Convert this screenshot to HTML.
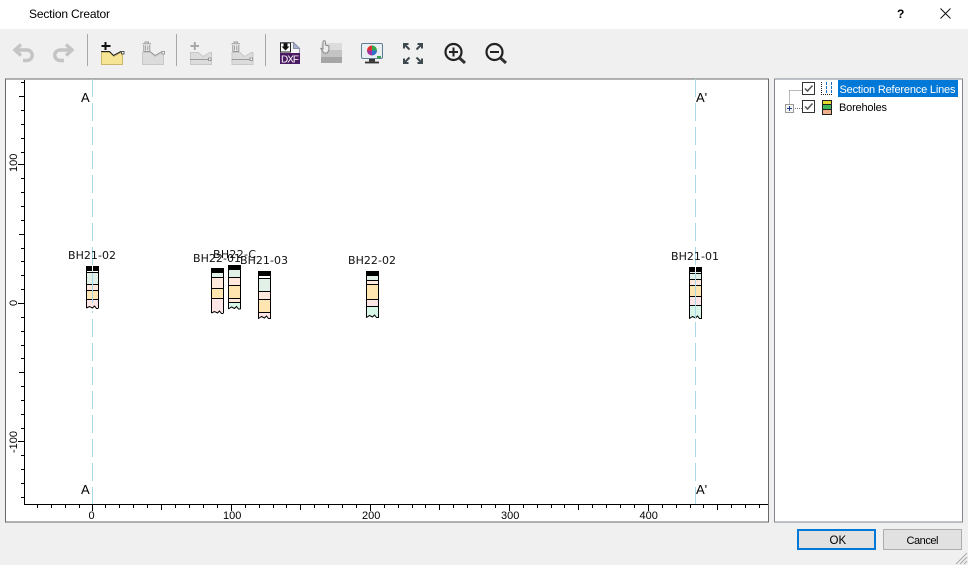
<!DOCTYPE html>
<html><head><meta charset="utf-8"><style>
html,body{margin:0;padding:0;width:968px;height:565px;overflow:hidden;background:#f0f0f0}
svg{display:block}
text{font-family:"Liberation Sans",sans-serif;fill:#000}
.l{font-family:"DejaVu Sans",sans-serif;font-size:11px;fill:#111}
.a{font-size:13px}
.t{font-size:11px}
.u{font-size:12px}
.c rect,.cr{shape-rendering:crispEdges}
</style></head><body>
<svg width="968" height="565" viewBox="0 0 968 565" xmlns="http://www.w3.org/2000/svg">
<rect width="968" height="565" fill="#f0f0f0"/>
<rect width="968" height="29" fill="#fff"/>
<text x="29" y="18" class="u" textLength="81">Section Creator</text>
<text x="897" y="18" style="font-size:12px;font-weight:bold" fill="#222">?</text>
<path d="M940.500 8.500l10 10M950.500 8.500l-10 10" stroke="#111" stroke-width="1" fill="none"/>

<!-- toolbar -->
<g fill="none" stroke="#c4c4c4" stroke-width="3.400">
<path d="M17 50h10a5 5 0 0 1 0 10.500h-4"/>
<path d="M21 44.500l-6 5.500 6 5.500"/>
<path d="M70 50h-10a5 5 0 0 0 0 10.500h4"/>
<path d="M66 44.500l6 5.500-6 5.500"/>
</g>
<g class="cr" stroke="#a8a8a8" fill="none"><path d="M87.500 34v32M176.500 34v32M265.500 34v32"/></g>

<!-- add section -->
<path d="M101.500 52.500h8l4.500 4 7-4h1.500v12h-21z" fill="#f6e594" stroke="#c9b86a"/>
<path d="M101 51.500h8.500l4 4 7.500-4" fill="none" stroke="#222" stroke-width="1"/>
<rect x="121.500" y="51.500" width="2.500" height="2.500" fill="#fff" stroke="#333" stroke-width=".8"/>
<path d="M101.500 46h9M105.500 42v8" stroke="#111" stroke-width="2" fill="none"/>
<!-- delete section -->
<path d="M142.500 52.500h8l4.500 4 7-4h1.500v12h-21z" fill="#dcdcdc" stroke="#c8c8c8"/>
<path d="M150 51.500l5 4 7-4" fill="none" stroke="#999"/>
<rect x="162" y="51.500" width="2.500" height="2.500" fill="#fff" stroke="#888" stroke-width=".8"/>
<path d="M142.500 43.800h8.500M145 43v-1h3.500v1M143.800 45v6.500h6v-6.500M145.600 45.500v5M147.800 45.500v5" fill="none" stroke="#999"/>
<!-- add line -->
<path d="M190.500 52.500h8l4.500 4 7-4h1.500v12h-21z" fill="#dcdcdc" stroke="#c8c8c8"/>
<path d="M190 59.500h19" stroke="#9a9a9a" fill="none"/>
<rect x="208.500" y="58" width="2.500" height="2.500" fill="#fff" stroke="#888" stroke-width=".8"/>
<path d="M190.500 46h8.500M194.800 42v8" stroke="#a8a8a8" stroke-width="2" fill="none"/>
<!-- delete line -->
<path d="M232 52.500h8l4.500 4 7-4h1.500v12h-21z" fill="#dcdcdc" stroke="#c8c8c8"/>
<path d="M231.500 59.500h19" stroke="#9a9a9a" fill="none"/>
<rect x="250" y="58" width="2.500" height="2.500" fill="#fff" stroke="#888" stroke-width=".8"/>
<path d="M231.500 43.800h8.500M234 43v-1h3.500v1M232.800 45v6.500h6v-6.500M234.600 45.500v5M236.800 45.500v5" fill="none" stroke="#999"/>

<!-- DXF -->
<path d="M280.500 42.500h13l6 6v6h-19z" fill="#f4f4f6" stroke="#8b8fa8"/>
<path d="M293.500 42.500v6h6z" fill="#a9b3cf" stroke="#8b8fa8"/>
<rect x="280.500" y="43" width="10" height="9" fill="#fff" stroke="#222"/>
<path d="M283.500 43.500h4v3h2l-4 4-4-4h2z" fill="#111"/>
<rect x="280" y="53" width="20" height="11" fill="#4a1a63"/>
<text x="281" y="62.300" style="font-size:10px;fill:#fff" textLength="18">DXF</text>
<!-- hand layers -->
<g class="c"><rect x="321" y="43" width="21" height="7" fill="#dcdcdc"/><rect x="321" y="50" width="21" height="7" fill="#c4c4c4"/><rect x="321" y="57" width="21" height="6" fill="#a6a6a6"/></g>
<path d="M323 49v-7a1.200 1.200 0 0 1 2.400 0v3l3.500 1v4l-1.500 3h-3.500l-3-4.500z" fill="#ececec" stroke="#888"/>
<!-- monitor -->
<rect x="361.500" y="43.500" width="21" height="15" rx="1.500" fill="#e8eef2" stroke="#5b7e94"/>
<path d="M369 59h6v2.500h-6z" fill="#333"/><path d="M365 62.500h14" stroke="#333" stroke-width="1.800" fill="none"/>
<circle cx="372" cy="50.500" r="5" fill="#f4b020"/>
<path d="M372 50.500V45.500A5 5 0 0 1 377 50.500z" fill="#2fa84f"/>
<path d="M372 50.500H377A5 5 0 0 1 372 55.500z" fill="#2f6fd0"/>
<path d="M372 50.500V55.500A5 5 0 0 1 367 50.500z" fill="#a030a8"/>
<path d="M372 50.500H367A5 5 0 0 1 372 45.500z" fill="#e03030"/>
<path d="M377 57h4" stroke="#2fa84f" stroke-width="2" fill="none"/>
<!-- expand -->
<g fill="none" stroke="#3f4a50" stroke-width="2">
<path d="M404 48.500V44h4.500M404.500 44.500l5 5"/>
<path d="M422 48.500V44h-4.500M421.500 44.500l-5 5"/>
<path d="M404 58.500V63h4.500M404.500 62.500l5-5"/>
<path d="M422 58.500V63h-4.500M421.500 62.500l-5-5"/>
</g>
<!-- zoom -->
<g fill="none" stroke="#222">
<circle cx="453.500" cy="52" r="8" stroke-width="2.200"/>
<path d="M449 52h9M453.500 47.500v9" stroke-width="2"/>
<path d="M459.500 58l5.500 5" stroke-width="3" stroke="#333"/>
<circle cx="494.500" cy="52" r="8" stroke-width="2.200"/>
<path d="M490 52h9" stroke-width="2"/>
<path d="M500.500 58l5.500 5" stroke-width="3" stroke="#333"/>
</g>

<!-- plot frame -->
<rect x="5.500" y="79" width="763" height="443" fill="#fff" stroke="#696969" class="cr"/>
<rect x="774.500" y="79" width="188" height="443" fill="#fff" stroke="#828790" class="cr"/>

<!-- reference lines -->
<g stroke="#a9d8e6" stroke-dasharray="18 6" class="cr" fill="none"><path d="M92.500 79V504M695.500 79V504"/></g>

<!-- axes -->
<g class="cr" stroke="#000" fill="none">
<path d="M24.500 80V504.500H768"/>
<path d="M37.500 505v3M51.500 505v3M65.500 505v3M79.500 505v3M92.500 505v6M105.500 505v3M119.500 505v3M133.500 505v3M147.500 505v3M161.500 505v5M175.500 505v3M189.500 505v3M203.500 505v3M217.500 505v3M231.500 505v6M245.500 505v3M259.500 505v3M273.500 505v3M286.500 505v3M300.500 505v5M314.500 505v3M328.500 505v3M342.500 505v3M356.500 505v3M370.500 505v6M384.500 505v3M398.500 505v3M412.500 505v3M425.500 505v3M439.500 505v5M453.500 505v3M467.500 505v3M481.500 505v3M495.500 505v3M509.500 505v6M523.500 505v3M537.500 505v3M551.500 505v3M564.500 505v3M578.500 505v5M592.500 505v3M606.500 505v3M620.500 505v3M634.500 505v3M648.500 505v6M662.500 505v3M676.500 505v3M690.500 505v3M703.500 505v3M717.500 505v5M731.500 505v3M745.500 505v3M759.500 505v3"/>
<path d="M21 82.500h3M19 96.500h5M21 110.500h3M21 124.500h3M21 138.500h3M21 152.500h3M18 164.500h6M21 178.500h3M21 192.500h3M21 206.500h3M21 220.500h3M19 234.500h5M21 248.500h3M21 261.500h3M21 275.500h3M21 289.500h3M18 303.500h6M21 317.500h3M21 331.500h3M21 345.500h3M21 358.500h3M19 372.500h5M21 386.500h3M21 400.500h3M21 414.500h3M21 428.500h3M18 441.500h6M21 455.500h3M21 469.500h3M21 483.500h3M21 497.500h3"/>
</g>
<g class="t">
<text x="88.500" y="519">0</text>
<text x="223" y="519">100</text>
<text x="362" y="519">200</text>
<text x="501" y="519">300</text>
<text x="639.500" y="519">400</text>
<text transform="translate(17,172) rotate(-90)">100</text>
<text transform="translate(17,306) rotate(-90)">0</text>
<text transform="translate(17,453) rotate(-90)">-100</text>
</g>
<g class="a">
<text x="81" y="102">A</text><text x="81" y="494">A</text>
<text x="696" y="102">A'</text><text x="696" y="494">A'</text>
</g>

<!-- boreholes -->
<g class="c">
<rect x="86" y="272" width="13" height="12" fill="#e2f1e8"/><rect x="86" y="284" width="13" height="6" fill="#ffe8dc"/><rect x="86" y="290" width="13" height="9" fill="#ffe6b0"/><rect x="86" y="299" width="13" height="9" fill="#ffe6e6"/>
<rect x="211" y="273" width="13" height="4" fill="#e2f1e8"/><rect x="211" y="277" width="13" height="11" fill="#ffe8dc"/><rect x="211" y="288" width="13" height="10" fill="#ffe6b0"/><rect x="211" y="298" width="13" height="15" fill="#ffe6e6"/>
<rect x="228" y="270" width="13" height="7" fill="#e2f1e8"/><rect x="228" y="277" width="13" height="8" fill="#ffe8dc"/><rect x="228" y="285" width="13" height="13" fill="#ffe6b0"/><rect x="228" y="298" width="13" height="4" fill="#ffe8dc"/><rect x="228" y="302" width="13" height="8" fill="#d8f7e8"/>
<rect x="258" y="278" width="13" height="13" fill="#e2f1e8"/><rect x="258" y="291" width="13" height="8" fill="#ffe8dc"/><rect x="258" y="299" width="13" height="13" fill="#ffe6b0"/><rect x="258" y="312" width="13" height="7" fill="#ffe6e6"/>
<rect x="366" y="276" width="13" height="4" fill="#e2f1e8"/><rect x="366" y="280" width="13" height="4" fill="#ffe8dc"/><rect x="366" y="284" width="13" height="15" fill="#ffe6b0"/><rect x="366" y="299" width="13" height="7" fill="#ffe6e6"/><rect x="366" y="306" width="13" height="12" fill="#d8f7e8"/>
<rect x="689" y="272" width="13" height="7" fill="#e2f1e8"/><rect x="689" y="279" width="13" height="6" fill="#ffe8dc"/><rect x="689" y="285" width="13" height="11" fill="#ffe6b0"/><rect x="689" y="296" width="13" height="9" fill="#ffe6e6"/><rect x="689" y="305" width="13" height="14" fill="#d8f7e8"/>
<!-- caps -->
<rect x="86" y="266" width="13" height="5" fill="#000"/><rect x="211" y="268" width="13" height="5" fill="#000"/><rect x="228" y="265" width="13" height="5" fill="#000"/><rect x="258" y="271" width="13" height="5" fill="#000"/><rect x="366" y="271" width="13" height="5" fill="#000"/><rect x="689" y="267" width="13" height="5" fill="#000"/>
</g>
<g class="cr" stroke="#000" fill="none">
<path d="M86.500 266V308M98.500 266V308M86 272.500h13M86 284.500h13M86 290.500h13M86 299.500h13"/>
<path d="M211.500 268V313M223.500 268V313M211 277.500h13M211 288.500h13M211 298.500h13"/>
<path d="M228.500 265V309M240.500 265V309M228 277.500h13M228 285.500h13M228 298.500h13M228 302.500h13"/>
<path d="M258.500 271V319M270.500 271V319M258 278.500h13M258 291.500h13M258 299.500h13M258 312.500h13"/>
<path d="M366.500 271V318M378.500 271V318M366 280.500h13M366 284.500h13M366 299.500h13M366 306.500h13"/>
<path d="M689.500 267V319M701.500 267V319M689 273.500h13M689 279.500h13M689 285.500h13M689 296.500h13M689 305.500h13"/>
</g>
<g stroke="#000" stroke-width="1">
<path d="M86 308.500l3-1.500 3 1 2-2 2 2 3 .5V311H86z" fill="#fff" stroke="none"/><path d="M86.500 308l3-1.500 3 1.500 2-2 2 2.500h2" fill="none"/>
<path d="M211 313.500l3-1.500 3 1 2-2 2 2 3 .5V316H211z" fill="#fff" stroke="none"/><path d="M211.500 313l3-1.500 3 1.500 2-2 2 2.500h2" fill="none"/>
<path d="M228 309.500l3-2 3 1 2-2 2 2 3 1V312H228z" fill="#fff" stroke="none"/><path d="M228.500 309l3-2 3 1.500 2-2 2 2.500h2" fill="none"/>
<path d="M258 319l3-1.500 3 1 2-2 2 2 3 .5V322H258z" fill="#fff" stroke="none"/><path d="M258.500 318.500l3-2 3 1.500 2-2 2 2.500h2" fill="none"/>
<path d="M366 318l3-1.500 3 1 2-2 2 2 3 .5V321H366z" fill="#fff" stroke="none"/><path d="M366.500 317.500l3-2 3 1.500 2-2 2 2.500h2" fill="none"/>
<path d="M689 319l3-1.500 3 1 2-2 2 2 3 .5V322H689z" fill="#fff" stroke="none"/><path d="M689.500 318.500l3-2 3 1.500 2-2 2 2.500h2" fill="none"/>
</g>
<!-- line over boreholes -->
<g stroke="#a9d8e6" class="cr" fill="none"><path d="M92.500 247V265M92.500 273V303M695.500 247V265M695.500 273V319"/></g>
<path d="M92.500 266v5M695.500 267v5" stroke="#fff" class="cr" fill="none"/>

<text class="l" x="68" y="259" textLength="48">BH21-02</text>
<text class="l" x="193" y="262" textLength="48">BH22-01</text>
<text class="l" x="213" y="258" textLength="43">BH22-C</text>
<text class="l" x="240" y="264" textLength="48">BH21-03</text>
<text class="l" x="348" y="264" textLength="48">BH22-02</text>
<text class="l" x="671" y="260" textLength="48">BH21-01</text>

<!-- tree -->
<path d="M789.500 90.500h13M789.500 90.500v14M793 108.500h9" stroke="#777" stroke-dasharray="1 1" fill="none" class="cr"/>
<rect x="785.500" y="104.500" width="8" height="8" fill="#f6f6f6" stroke="#999" class="cr"/>
<path d="M787 108.500h5M789.500 106v5" stroke="#223a8a" class="cr" fill="none"/>
<rect x="802.500" y="82.500" width="12" height="12" fill="#fff" stroke="#333" class="cr"/>
<rect x="802.500" y="100.500" width="12" height="12" fill="#fff" stroke="#333" class="cr"/>
<path d="M805 88.500l2.500 2.500 5-5.500M805 106.500l2.500 2.500 5-5.500" fill="none" stroke="#555" stroke-width="1.500"/>
<!-- section icon -->
<path d="M821.500 82v12.500h11" fill="none" stroke="#222" stroke-dasharray="1 1" class="cr"/>
<path d="M826.500 82v11M831.500 82v11" stroke="#1a6fc4" stroke-dasharray="3 1" class="cr" fill="none"/>
<!-- borehole icon -->
<g class="c"><rect x="822" y="100" width="10" height="5" fill="#e8d830"/><rect x="822" y="105" width="10" height="4" fill="#3fb85a"/><rect x="822" y="109" width="10" height="5" fill="#eeb088"/></g>
<rect x="822.500" y="100.500" width="9" height="14" fill="none" stroke="#222" class="cr"/>
<path d="M822 104.500h10M822 109.500h10" stroke="#222" class="cr" fill="none"/>
<rect x="838" y="80" width="120" height="17" fill="#0078d7"/>
<text x="839.500" y="93" style="font-size:11px;fill:#fff" textLength="116">Section Reference Lines</text>
<text x="839" y="111" style="font-size:11px" textLength="48">Boreholes</text>

<!-- buttons -->
<rect x="798" y="530" width="77" height="19" fill="#e1e1e1" stroke="#0078d7" stroke-width="2" class="cr"/>
<text x="829.500" y="544" style="font-size:11.500px">OK</text>
<rect x="883.500" y="529.500" width="78" height="20" fill="#e1e1e1" stroke="#adadad" class="cr"/>
<text x="906.500" y="544" style="font-size:11px" textLength="32">Cancel</text>
<path d="M956 564l11-11M960 564l7-7M964 564l3-3" stroke="#aaa" fill="none"/>
</svg>
</body></html>
